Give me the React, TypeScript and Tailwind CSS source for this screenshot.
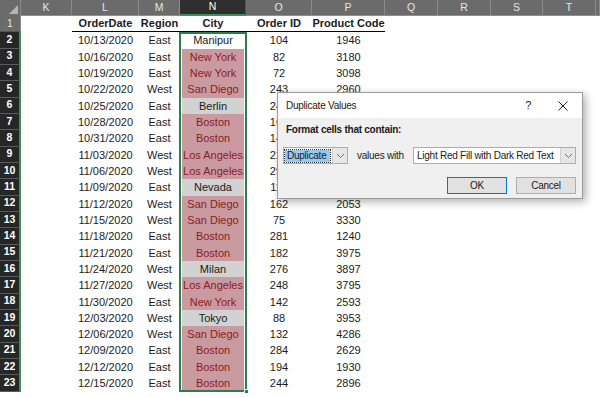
import React from "react";

const COLS = ["K", "L", "M", "N", "O", "P", "Q", "R", "S", "T", ""];
const COL_W = [
  "w-[51px]",
  "w-[67px]",
  "w-[41px]",
  "w-[66px]",
  "w-[66px]",
  "w-[73px]",
  "w-[53px]",
  "w-[53px]",
  "w-[52px]",
  "w-[53px]",
  "flex-1",
];

type Row = [string, string, string, string, string];

const rows: Row[] = [
  ["10/13/2020", "East", "Manipur", "104", "1946"],
  ["10/16/2020", "East", "New York", "82", "3180"],
  ["10/19/2020", "East", "New York", "72", "3098"],
  ["10/22/2020", "West", "San Diego", "243", "2960"],
  ["10/25/2020", "East", "Berlin", "245", "1317"],
  ["10/28/2020", "East", "Boston", "166", "2215"],
  ["10/31/2020", "East", "Boston", "148", "3562"],
  ["11/03/2020", "West", "Los Angeles", "223", "1864"],
  ["11/06/2020", "West", "Los Angeles", "290", "2748"],
  ["11/09/2020", "East", "Nevada", "117", "3401"],
  ["11/12/2020", "West", "San Diego", "162", "2053"],
  ["11/15/2020", "West", "San Diego", "75", "3330"],
  ["11/18/2020", "East", "Boston", "281", "1240"],
  ["11/21/2020", "East", "Boston", "182", "3975"],
  ["11/24/2020", "West", "Milan", "276", "3897"],
  ["11/27/2020", "West", "Los Angeles", "248", "3795"],
  ["11/30/2020", "East", "New York", "142", "2593"],
  ["12/03/2020", "West", "Tokyo", "88", "3953"],
  ["12/06/2020", "West", "San Diego", "132", "4286"],
  ["12/09/2020", "East", "Boston", "284", "2629"],
  ["12/12/2020", "East", "Boston", "194", "1930"],
  ["12/15/2020", "East", "Boston", "244", "2896"],
];

const cityCount = rows.reduce<Record<string, number>>((acc, r) => {
  acc[r[2]] = (acc[r[2]] || 0) + 1;
  return acc;
}, {});

function Chevron() {
  return (
    <svg width="9" height="6" viewBox="0 0 9 6" fill="none">
      <polyline points="1,1 4.5,4.5 8,1" stroke="#707070" strokeWidth="1" />
    </svg>
  );
}

function Dialog() {
  return (
    <div className="absolute left-[277px] top-[92px] w-[306px] h-[107px] border border-[#9a9a9a] bg-[#f0f0f0] shadow-[3px_3px_8px_rgba(0,0,0,0.3)] flex flex-col text-[10px] tracking-[-0.25px] text-[#1a1a1a]">
      {/* Title bar */}
      <div className="h-[25px] bg-white flex items-center pl-[8px] pr-[14px]">
        <span className="text-[10px]">Duplicate Values</span>
        <span className="ml-auto mr-[27px] text-[11px]">?</span>
        <svg width="10" height="10" viewBox="0 0 10 10">
          <path d="M0.5 0.5 L9.5 9.5 M9.5 0.5 L0.5 9.5" stroke="#222" strokeWidth="1" />
        </svg>
      </div>
      <div className="flex flex-col px-[5px] pt-[6px]">
        <div className="font-bold pl-[3px] h-[12px] leading-[12px]">Format cells that contain:</div>
        <div className="flex items-center mt-[11px] h-[17px]">
          <div className="w-[65px] h-[17px] border border-[#adadad] bg-white flex items-center">
            <div className="flex-1 pl-[1px]">
              <span className="inline-block bg-[#99c9ef] outline outline-1 outline-dotted outline-[#333] pl-[2px] pr-[4px] leading-[12px]">
                Duplicate
              </span>
            </div>
            <div className="w-[15px] h-full bg-[#e6e6e6] border-l border-[#d0d0d0] flex items-center justify-center">
              <Chevron />
            </div>
          </div>
          <span className="ml-[9px] w-[56px]">values with</span>
          <div className="w-[163px] h-[17px] border border-[#adadad] bg-white flex items-center">
            <span className="flex-1 pl-[3px] whitespace-nowrap overflow-hidden">Light Red Fill with Dark Red Text</span>
            <div className="w-[15px] h-full bg-[#e6e6e6] border-l border-[#d0d0d0] flex items-center justify-center">
              <Chevron />
            </div>
          </div>
        </div>
        <div className="flex justify-end gap-[9px] mt-[13px] pr-[1px]">
          <button className="w-[60px] h-[17px] bg-[#e1e1e1] border border-[#0078d7] text-[10px] leading-none">OK</button>
          <button className="w-[60px] h-[17px] bg-[#e1e1e1] border border-[#adadad] text-[10px] leading-none">Cancel</button>
        </div>
      </div>
    </div>
  );
}

export default function App() {
  return (
    <div className="relative w-[600px] h-[397px] overflow-hidden bg-white font-['Liberation_Sans',Arial,sans-serif] text-[11px] text-[#1b1b1b]">
      {/* Column headers */}
      <div className="flex h-[16px] bg-[#6b6b6b] text-[#e6e6e6] text-[10.5px]">
        <div className="w-[21px] h-full border-r border-[#8a8a8a] flex items-end justify-end p-[2px]">
          <svg width="9" height="9" viewBox="0 0 9 9">
            <polygon points="9,0 9,9 0,9" fill="#b5b5b5" />
          </svg>
        </div>
        {COLS.map((c, i) => (
          <div
            key={i}
            className={`${COL_W[i]} h-full flex items-center justify-center border-r ${
              c === "N" ? "bg-[#2e2e2e] text-white border-[#555] border-b-2 border-b-[#3e8e5e]" : "border-[#8a8a8a] border-b border-b-[#8f8f8f]"
            }`}
          >
            {c}
          </div>
        ))}
      </div>

      {/* Row 1: headers */}
      <div className="flex h-[16.33px]">
        <div className="w-[21px] h-full bg-[#6b6b6b] text-[#e6e6e6] text-[10.5px] border-r border-[#8a8a8a] border-b border-b-[#555] flex items-center justify-center">
          1
        </div>
        <div className={COL_W[0]} />
        {["OrderDate", "Region", "City", "Order ID", "Product Code"].map((h, i) => (
          <div
            key={h}
            className={`${COL_W[i + 1]} h-full flex items-center justify-center font-bold border-b border-black`}
          >
            {h}
          </div>
        ))}
      </div>

      {/* Data rows */}
      {rows.map((r, idx) => {
        const dup = cityCount[r[2]] > 1;
        const active = idx === 0;
        const cityCls = active
          ? "bg-white text-[#1b1b1b]"
          : dup
          ? "bg-[#c99aa0] text-[#8e1a22]"
          : "bg-[#d2d2d2] text-[#1b1b1b]";
        return (
          <div key={idx} className="flex h-[16.33px]">
            <div className="w-[21px] h-full bg-[#262626] text-white text-[10.5px] font-bold border-r-2 border-[#3e8e5e] border-b border-b-[#5a5a5a] flex items-center justify-center">
              {idx + 2}
            </div>
            <div className={COL_W[0]} />
            <div className={`${COL_W[1]} flex items-center justify-center`}>{r[0]}</div>
            <div className={`${COL_W[2]} flex items-center justify-center`}>{r[1]}</div>
            <div className={`${COL_W[3]} flex items-center justify-center px-[2px]`}>
              <div className={`w-full h-full flex items-center justify-center whitespace-nowrap ${cityCls}`}>{r[2]}</div>
            </div>
            <div className={`${COL_W[4]} flex items-center justify-center`}>{r[3]}</div>
            <div className={`${COL_W[5]} flex items-center justify-center`}>{r[4]}</div>
          </div>
        );
      })}

      {/* Selection outline N2:N23 */}
      <div className="absolute left-[179px] top-[32px] w-[68px] h-[360px] border-2 border-[#2f7d4f] pointer-events-none" />
      <div className="absolute left-[244px] top-[389px] w-[5px] h-[5px] bg-[#2f7d4f] border border-white" />

      <Dialog />
    </div>
  );
}
